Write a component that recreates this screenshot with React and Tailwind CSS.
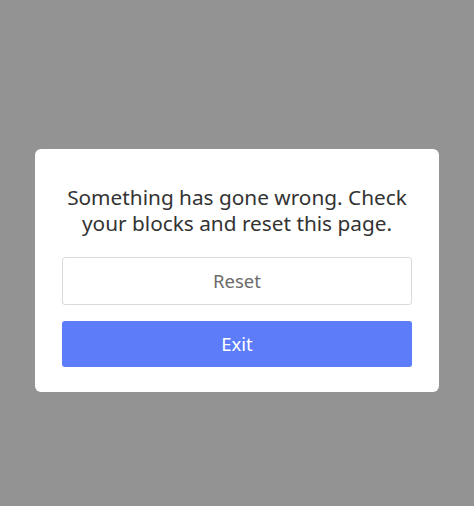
export default function App() {
  return (
    <div
      className="min-h-screen w-full bg-[#939393] flex justify-center pt-[149px]"
      style={{ fontFamily: '"Noto Sans", sans-serif' }}
    >
      <div className="w-[404px] h-[243px] bg-white rounded-md px-[27px] pt-[35px] pb-[25px] flex flex-col">
        <p className="text-center text-[20.8px] leading-[26px] text-[#333333]">
          Something has gone wrong. Check your blocks and reset this page.
        </p>
        <button className="mt-[21px] h-[48px] w-full rounded-[3px] border border-[#d9d9de] bg-white text-[18.5px] text-[#6b6b6b]">
          Reset
        </button>
        <button className="mt-[16px] h-[47px] w-full rounded-[3px] bg-[#5c7cfa] text-[18.5px] text-white">
          Exit
        </button>
      </div>
    </div>
  );
}
